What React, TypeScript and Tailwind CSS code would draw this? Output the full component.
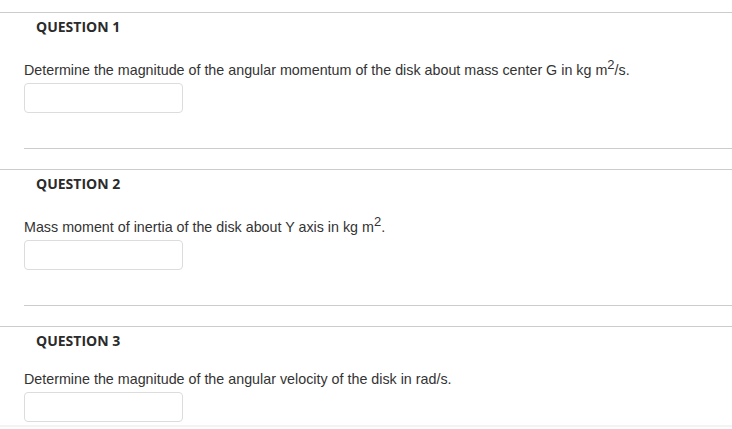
import React from "react";

type Q = { n: number; text: React.ReactNode };

const Sup = ({ children }: { children: React.ReactNode }) => (
  <span className="text-[13px] leading-[20px] align-[6px]">{children}</span>
);

const questions: Q[] = [
  {
    n: 1,
    text: (
      <>
        Determine the magnitude of the angular momentum of the disk about mass center G in kg m<Sup>2</Sup>/s.
      </>
    ),
  },
  {
    n: 2,
    text: (
      <>
        Mass moment of inertia of the disk about Y axis in kg m<Sup>2</Sup>.
      </>
    ),
  },
  {
    n: 3,
    text: <>Determine the magnitude of the angular velocity of the disk in rad/s.</>,
  },
];

function Question({ q, last }: { q: Q; last: boolean }) {
  return (
    <section className="border-t border-[#cccccc]">
      <h3 className="mt-[4px] pl-[36px] text-[14px] leading-[20px] font-bold text-[#2b2b2b] font-['Open_Sans',sans-serif]">
        QUESTION {q.n}
      </h3>
      <p className="mt-[18px] pl-[24px] text-[14.3px] leading-[20px] text-[#333333] font-['Liberation_Sans',Arial,sans-serif]">
        {q.text}
      </p>
      <div className="ml-[24px] mt-[3px] h-[30px] w-[159px] rounded-[4px] border border-[#dcdcdc] bg-white" />
      {!last && (
        <div className="ml-[24px] mt-[35px] mb-[20px] border-t border-[#cccccc]" />
      )}
    </section>
  );
}

export default function App() {
  return (
    <div className="min-h-[429px] bg-white pt-[12px]">
      {questions.map((q, i) => (
        <Question key={q.n} q={q} last={i === questions.length - 1} />
      ))}
      <div className="mt-[3px] h-[2px] bg-[#f3f3f3]" />
    </div>
  );
}
